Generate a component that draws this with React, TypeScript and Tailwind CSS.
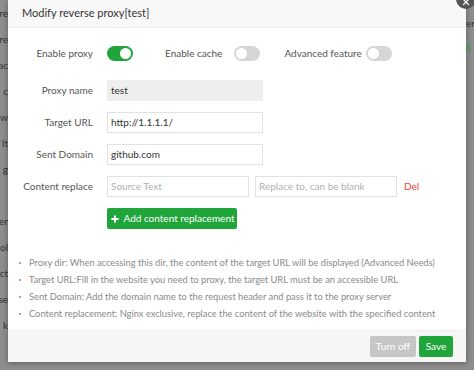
import { Plus, X } from 'lucide-react'

const leftBits = ['re', 're', 'ac', 'c', 'ew', 'lt', 'g', '', 'er', 'ol', 'ct', 'se', 'k']

function Toggle({ on }: { on: boolean }) {
  return (
    <div
      className={`flex h-[15px] w-[26px] shrink-0 items-center rounded-full px-[2px] ${
        on ? 'justify-end bg-[#20a53a]' : 'justify-start bg-[#d6d6d6]'
      }`}
    >
      <div className="h-[11px] w-[11px] rounded-full bg-white" />
    </div>
  )
}

function Row({ label, children }: { label: string; children: React.ReactNode }) {
  return (
    <div className="flex items-center">
      <div className="w-[99px] shrink-0 whitespace-nowrap pr-[14px] text-right text-[10px] text-[#555]">{label}</div>
      {children}
    </div>
  )
}

const notes = [
  'Proxy dir: When accessing this dir, the content of the target URL will be displayed (Advanced Needs)',
  'Target URL:Fill in the website you need to proxy, the target URL must be an accessible URL',
  'Sent Domain: Add the domain name to the request header and pass it to the proxy server',
  'Content replacement: Nginx exclusive, replace the content of the website with the specified content',
]

export default function App() {
  return (
    <div
      className="relative flex h-[370px] w-[474px] overflow-hidden bg-[#8e8e8e]"
      style={{ fontFamily: 'Lato, "Open Sans", sans-serif' }}
    >
      {/* page behind the dialog */}
      <div className="flex w-[8px] shrink-0 flex-col items-end gap-[11px] overflow-hidden pt-[6px] text-[10px] leading-[15px] text-[#333]">
        {leftBits.map((b, i) => (
          <div key={i} className="h-[15px] whitespace-nowrap">
            {b}
          </div>
        ))}
      </div>

      <div className="flex h-[362px] w-[458px] shrink-0 flex-col bg-white shadow-[0_1px_6px_rgba(0,0,0,0.35)]">
        <div className="flex h-[28px] shrink-0 items-center border-b border-[#eee] bg-[#f8f8f8] pl-[14px] text-[11px] text-[#333]">
          Modify reverse proxy[test]
        </div>

        <div className="flex flex-col gap-[11px] pt-[18px]">
          <div className="flex items-center">
            <div className="w-[99px] shrink-0 whitespace-nowrap pr-[14px] text-right text-[10px] text-[#555]">
              Enable proxy
            </div>
            <Toggle on />
            <div className="ml-[32px] mr-[12px] whitespace-nowrap text-[10px] text-[#555]">Enable cache</div>
            <Toggle on={false} />
            <div className="ml-[24px] mr-[4px] whitespace-nowrap text-[10px] text-[#555]">Advanced feature</div>
            <Toggle on={false} />
          </div>

          <div className="flex flex-col gap-[11px] pt-[8px]">
            <Row label="Proxy name">
              <div className="flex h-[21px] w-[156px] items-center bg-[#eeeeee] px-[4px] text-[10px] text-[#333]">
                test
              </div>
            </Row>
            <Row label="Target URL">
              <div className="flex h-[21px] w-[156px] items-center border border-[#e2e2e2] px-[3px] text-[10px] text-[#333]">
                http://1.1.1.1/
              </div>
            </Row>
            <Row label="Sent Domain">
              <div className="flex h-[21px] w-[156px] items-center border border-[#e2e2e2] px-[3px] text-[10px] text-[#333]">
                github.com
              </div>
            </Row>
            <Row label="Content replace">
              <div className="flex h-[21px] w-[142px] items-center border border-[#e2e2e2] px-[3px] text-[10px] text-[#b0b0b0]">
                Source Text
              </div>
              <div className="ml-[6px] flex h-[21px] w-[142px] items-center border border-[#e2e2e2] px-[3px] text-[10px] text-[#b0b0b0]">
                Replace to, can be blank
              </div>
              <div className="ml-[7px] text-[10px] text-[#e6443a]">Del</div>
            </Row>
            <div className="flex pl-[99px]">
              <button className="flex h-[21px] w-[130px] items-center justify-center gap-[4px] whitespace-nowrap rounded-[2px] bg-[#20a53a] text-[10px] text-white">
                <Plus size={10} strokeWidth={4.5} />
                Add content replacement
              </button>
            </div>
          </div>
        </div>

        <ul className="mt-[27px] flex flex-col gap-[3px] pl-[11px] text-[9.3px] leading-[14px] text-[#8a8a8a]">
          {notes.map((n) => (
            <li key={n} className="flex items-center gap-[8px] whitespace-nowrap">
              <span className="h-[2px] w-[2px] shrink-0 rounded-full bg-[#888]" />
              {n}
            </li>
          ))}
        </ul>

        <div className="mt-auto flex h-[32px] shrink-0 items-center justify-end gap-[3px] border-t border-[#eee] bg-[#f6f6f6] pr-[13px]">
          <button className="h-[21px] w-[46px] rounded-[2px] bg-[#c6c6c6] text-[10px] text-white">Turn off</button>
          <button className="h-[21px] w-[34px] rounded-[2px] bg-[#20a53a] text-[10px] text-white">Save</button>
        </div>
      </div>

      <div className="flex w-[8px] shrink-0 flex-col overflow-hidden pt-[16px] text-[10px] leading-[14px]">
        <div className="text-[#333]">er</div>
        <div className="mt-[10px] text-[#20a53a]">li</div>
      </div>

      <div className="absolute left-[456px] top-[-11px] flex h-[20px] w-[20px] items-center justify-center rounded-full bg-[#555]">
        <X size={10} strokeWidth={3} className="mt-[6px] text-white" />
      </div>
    </div>
  )
}
